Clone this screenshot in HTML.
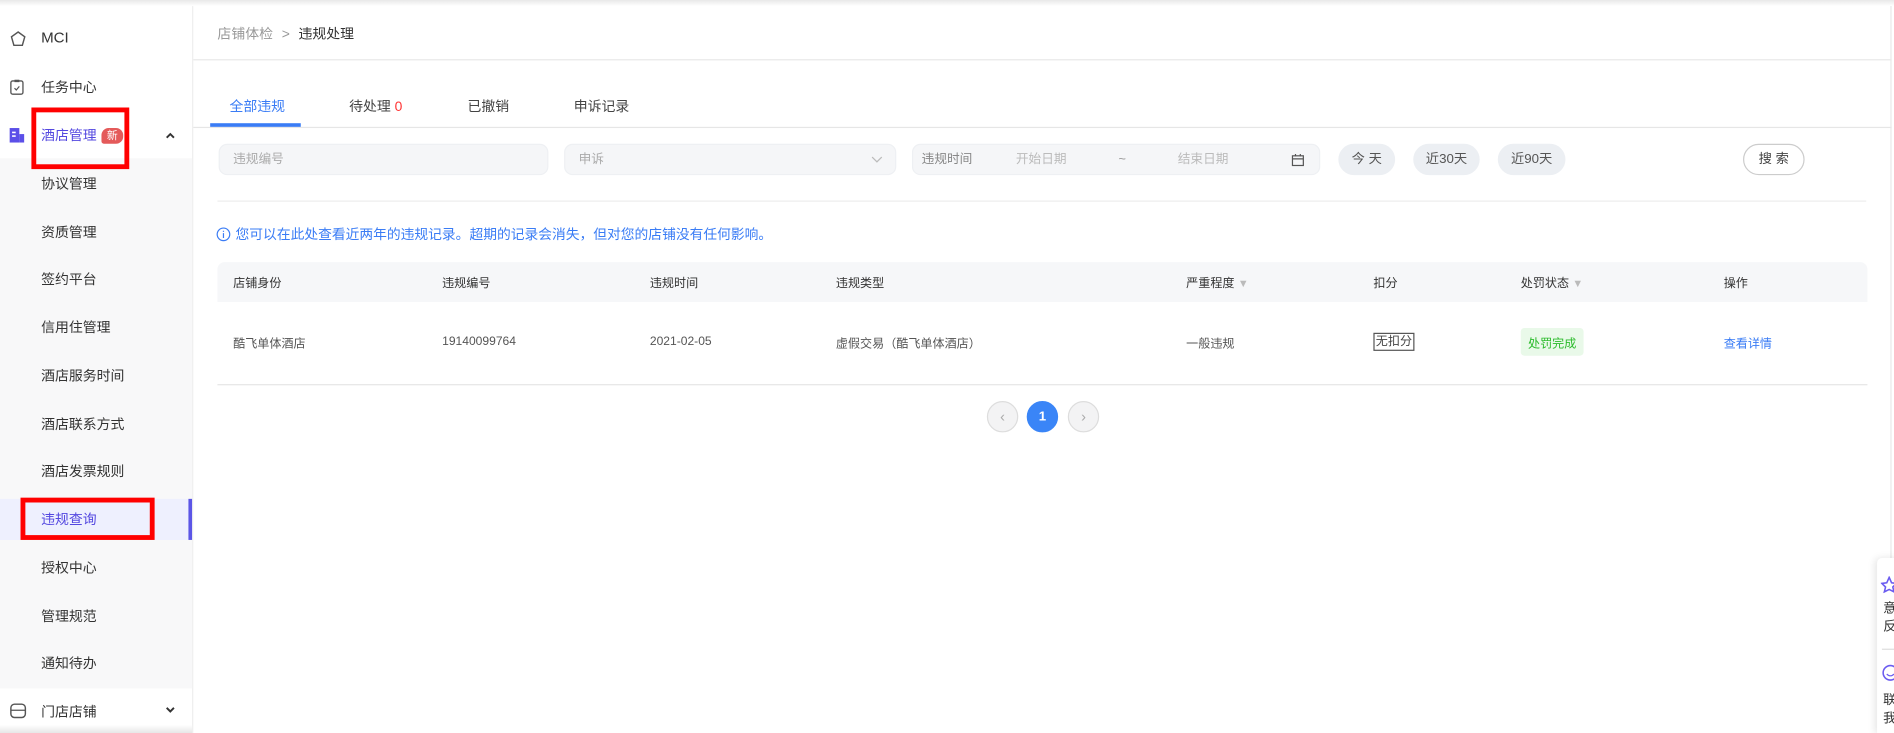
<!DOCTYPE html>
<html><head><meta charset="utf-8"><style>
html,body{margin:0;padding:0;width:1894px;height:733px;overflow:hidden;background:#fff}
#s{position:absolute;left:0;top:0;width:1568px;height:607px;transform:scale(1.20791);transform-origin:0 0;font-family:"Liberation Sans","Noto Sans CJK SC",sans-serif;color:#333;font-size:12px}
.a{position:absolute;white-space:nowrap}
.side{position:absolute;left:0;top:5px;width:159px;height:602px;border-right:1px solid #eee;background:#fff}
.sub{position:absolute;left:0;top:131px;width:159px;height:439px;background:#f8f8f9}
.mi{position:absolute;left:34px;font-size:11.5px;color:#333;transform:translateY(-50%)}
.red{position:absolute;border:4px solid #f00;box-sizing:border-box}
.hd{position:absolute;transform:translateY(-50%);font-size:10px;color:#333}
.pill{position:absolute;top:119px;height:26px;border-radius:13px;background:#eceff3;color:#555;font-size:11px;line-height:26px;text-align:center}
.inp{position:absolute;top:119px;height:26px;border-radius:7px;background:#f5f6f8;border:1px solid #eef0f3;box-sizing:border-box;color:#aaa;font-size:10.5px;line-height:24px}
.pg{position:absolute;top:332px;width:24px;height:24px;border-radius:50%;border:1px solid #ddd;background:#f3f3f4;text-align:center;line-height:24px;color:#aaa}
.tab{position:absolute;top:80px;font-size:11.5px;color:#444}
</style></head><body><div id="s">
<div class="a" style="left:0;top:0;width:1568px;height:5px;background:linear-gradient(#e8e8e8,#fff)"></div>
<div class="side"></div>
<div class="sub"></div>
<div class="a" style="left:0;top:413px;width:159px;height:34px;background:#eef0fe"></div>
<div class="a" style="left:156px;top:413px;width:3px;height:34px;background:#5b55e6"></div>
<svg class="a" style="left:8px;top:25px" width="14" height="14" viewBox="0 0 14 14"><path d="M7 1.5 12.5 5.5 10.5 12.5H3.5L1.5 5.5Z" fill="none" stroke="#555" stroke-width="1.2"/></svg>
<div class="mi" style="top:31px;font-size:12.5px">MCI</div>
<svg class="a" style="left:8px;top:65px" width="12" height="14" viewBox="0 0 12 14"><rect x="1" y="2" width="10" height="11" rx="1.5" fill="none" stroke="#555" stroke-width="1.1"/><rect x="4" y="1" width="4" height="2" fill="#555"/><path d="M4 8l1.5 1.5L8 6.5" fill="none" stroke="#555"/></svg>
<div class="mi" style="top:72px">任务中心</div>
<svg class="a" style="left:7px;top:105px" width="14" height="14" viewBox="0 0 14 14"><rect x="1" y="1" width="8" height="12" fill="#5b4fe8"/><rect x="9" y="6" width="4" height="7" fill="#5b4fe8"/><rect x="3" y="4" width="3" height="1.3" fill="#fff"/><rect x="3" y="7" width="3" height="1.3" fill="#fff"/></svg>
<div class="mi" style="top:112px;color:#5448e0">酒店管理</div>
<div class="a" style="left:84px;top:106px;width:18px;height:13px;background:#e45a5a;border-radius:6px 6px 6px 2px;color:#fff;font-size:9px;line-height:13px;text-align:center">新</div>
<svg class="a" style="left:136px;top:108px" width="10" height="8" viewBox="0 0 10 8"><path d="M2 6 5 3 8 6" fill="none" stroke="#333" stroke-width="1.6"/></svg>
<div class="mi" style="top:152px">协议管理</div>
<div class="mi" style="top:192px">资质管理</div>
<div class="mi" style="top:231px">签约平台</div>
<div class="mi" style="top:271px">信用住管理</div>
<div class="mi" style="top:311px">酒店服务时间</div>
<div class="mi" style="top:351px">酒店联系方式</div>
<div class="mi" style="top:390px">酒店发票规则</div>
<div class="mi" style="top:430px;color:#5448e0">违规查询</div>
<div class="mi" style="top:470px">授权中心</div>
<div class="mi" style="top:510px">管理规范</div>
<div class="mi" style="top:549px">通知待办</div>
<svg class="a" style="left:8px;top:582px" width="14" height="13" viewBox="0 0 14 13"><rect x="1" y="1" width="12" height="11" rx="3" fill="none" stroke="#555" stroke-width="1.2"/><path d="M1 6h12" stroke="#555"/></svg>
<div class="mi" style="top:589px">门店店铺</div>
<svg class="a" style="left:136px;top:584px" width="10" height="8" viewBox="0 0 10 8"><path d="M2 2 5 5 8 2" fill="none" stroke="#333" stroke-width="1.6"/></svg>
<div class="a" style="left:0;top:600px;width:159px;height:7px;background:linear-gradient(#fff,#e6e6e6)"></div>
<div class="red" style="left:26px;top:89px;width:81px;height:51px"></div>
<div class="red" style="left:17px;top:412px;width:111px;height:35px"></div>

<div class="a" style="left:180px;top:20px;font-size:11.5px;color:#999">店铺体检 <span style="margin:0 4px">&gt;</span> <span style="color:#333">违规处理</span></div>
<div class="a" style="left:160px;top:49px;width:1406px;height:1px;background:#e8e8e8"></div>
<div class="a" style="left:1565px;top:5px;width:1px;height:602px;background:#e8e8e8"></div>
<div class="tab" style="left:190px;color:#3a7cf5">全部违规</div>
<div class="tab" style="left:289px">待处理 <span style="color:#f33">0</span></div>
<div class="tab" style="left:387px">已撤销</div>
<div class="tab" style="left:475px">申诉记录</div>
<div class="a" style="left:160px;top:105px;width:1406px;height:1px;background:#e6e6e6"></div>
<div class="a" style="left:174px;top:102px;width:75px;height:3px;background:#3a7cf5"></div>

<div class="inp" style="left:181px;width:273px;padding-left:11px">违规编号</div>
<div class="inp" style="left:467px;width:275px;padding-left:11px">申诉<svg style="position:absolute;right:10px;top:9px" width="10" height="7" viewBox="0 0 10 7"><path d="M1 1 5 5 9 1" fill="none" stroke="#bbb"/></svg></div>
<div class="inp" style="left:755px;width:338px;padding-left:7px;color:#888">违规时间<span style="position:absolute;left:85px;color:#bbb">开始日期</span><span style="position:absolute;left:170px;color:#999">~</span><span style="position:absolute;left:219px;color:#bbb">结束日期</span><svg style="position:absolute;right:12px;top:7px" width="11" height="11" viewBox="0 0 11 11"><rect x="1" y="2" width="9" height="8" fill="none" stroke="#555"/><path d="M1 4.5h9M3.5 0.5v2M7.5 0.5v2" stroke="#555"/></svg></div>
<div class="pill" style="left:1108px;width:47px">今 天</div>
<div class="pill" style="left:1170px;width:55px">近30天</div>
<div class="pill" style="left:1240px;width:56px">近90天</div>
<div class="pill" style="left:1443px;width:51px;background:#fff;border:1px solid #ccc;box-sizing:border-box;line-height:24px;color:#444">搜 索</div>
<div class="a" style="left:180px;top:166px;width:1365px;height:1px;background:#eee"></div>

<svg class="a" style="left:179px;top:188px" width="12" height="12" viewBox="0 0 12 12"><circle cx="6" cy="6" r="5.2" fill="none" stroke="#3a7cf5"/><path d="M6 5v4M6 3v1" stroke="#3a7cf5"/></svg>
<div class="a" style="left:195px;top:186px;font-size:11.4px;color:#3a7cf5">您可以在此处查看近两年的违规记录。超期的记录会消失，但对您的店铺没有任何影响。</div>

<div class="a" style="left:180px;top:217px;width:1366px;height:33px;background:#f6f7f9;border-radius:6px 6px 0 0"></div>
<div class="hd" style="left:193px;top:233px">店铺身份</div>
<div class="hd" style="left:366px;top:233px">违规编号</div>
<div class="hd" style="left:538px;top:233px">违规时间</div>
<div class="hd" style="left:692px;top:233px">违规类型</div>
<div class="hd" style="left:982px;top:233px">严重程度 <span style="color:#bbb;font-size:9px">▼</span></div>
<div class="hd" style="left:1137px;top:233px">扣分</div>
<div class="hd" style="left:1259px;top:233px">处罚状态 <span style="color:#bbb;font-size:9px">▼</span></div>
<div class="hd" style="left:1427px;top:233px">操作</div>
<div class="hd" style="left:193px;top:283px;color:#555">酷飞单体酒店</div>
<div class="hd" style="left:366px;top:283px;color:#555">19140099764</div>
<div class="hd" style="left:538px;top:283px;color:#555">2021-02-05</div>
<div class="hd" style="left:692px;top:283px;color:#555">虚假交易（酷飞单体酒店）</div>
<div class="hd" style="left:982px;top:283px;color:#555">一般违规</div>
<div class="hd" style="left:1137px;top:283px;border:1px solid #555;padding:0 1px;line-height:13px;color:#444">无扣分</div>
<div class="hd" style="left:1259px;top:283px;background:#e9f9e9;color:#2bbb2b;padding:4px 6px;border-radius:3px">处罚完成</div>
<div class="hd" style="left:1427px;top:283px;color:#3a7cf5">查看详情</div>
<div class="a" style="left:180px;top:318px;width:1366px;height:1px;background:#e6e6e6"></div>

<div class="pg" style="left:817px">&lsaquo;</div>
<div class="pg" style="left:850px;background:#3a85f7;border-color:#3a85f7;color:#fff;font-weight:bold;font-size:11px">1</div>
<div class="pg" style="left:884px">&rsaquo;</div>

<div class="a" style="left:1554px;top:462px;width:20px;height:145px;background:#fff;box-shadow:-2px 0 6px rgba(0,0,0,.1);border-radius:4px 0 0 0"></div>
<svg class="a" style="left:1557px;top:477px" width="12" height="14" viewBox="0 0 12 14"><path d="M7 1 9 5.5 13 6 10 9 11 13 7 11 3 13 4 9 1 6 5 5.5Z" fill="none" stroke="#6b5cf0" stroke-width="1.3"/></svg>
<div class="a" style="left:1559px;top:497px;font-size:11px;line-height:15px">意<br>反</div>
<div class="a" style="left:1558px;top:537px;width:10px;height:1px;background:#ddd"></div>
<svg class="a" style="left:1557px;top:550px" width="12" height="14" viewBox="0 0 12 14"><circle cx="8" cy="7" r="6" fill="none" stroke="#6b5cf0" stroke-width="1.3"/><path d="M5 8q3 3 6 0" fill="none" stroke="#6b5cf0"/></svg>
<div class="a" style="left:1559px;top:573px;font-size:11px;line-height:15px">联<br>我</div>
</div></body></html>
